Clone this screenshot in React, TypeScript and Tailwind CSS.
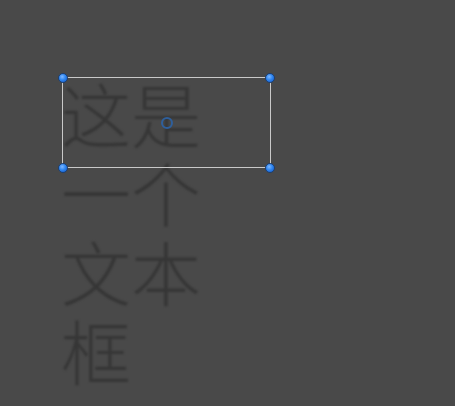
export default function App() {
  const handle =
    "absolute w-[10px] h-[10px] rounded-full border border-[#1b3f73] bg-[radial-gradient(circle_at_40%_35%,#7fb8ff_0%,#2f86f0_45%,#1556c4_100%)]";
  return (
    <div className="relative w-[455px] h-[406px] overflow-hidden bg-[#494949]">
      {/* vertical-wrapping label text */}
      <div
        className="absolute left-[61px] top-[73px] w-[142px] text-[70px] leading-[79px] font-light text-[#363636] blur-[1.2px]"
        style={{ fontFamily: '"Noto Sans CJK SC", sans-serif' }}
      >
        这是一个文本框
      </div>
      {/* selection frame */}
      <div className="absolute left-[62px] top-[77px] w-[209px] h-[91px] border border-[#c9c9c9]" />
      <div className={handle + " left-[58px] top-[73px]"} />
      <div className={handle + " left-[265px] top-[73px]"} />
      <div className={handle + " left-[58px] top-[163px]"} />
      <div className={handle + " left-[265px] top-[163px]"} />
      {/* pivot marker */}
      <div className="absolute left-[161px] top-[117px] w-[12px] h-[12px] rounded-full border-2 border-[#2e5f9c]" />
    </div>
  );
}
